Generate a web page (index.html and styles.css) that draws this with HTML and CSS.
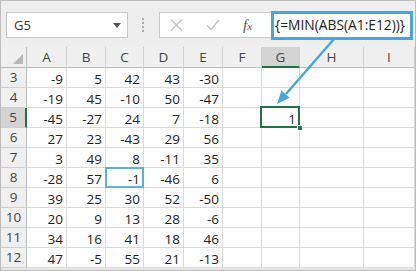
FILE: index.html
```html
<!DOCTYPE html>
<html lang="en">
<head>
    <meta charset="UTF-8">
    <title>MIN(ABS) array formula</title>
    <link rel="stylesheet" href="styles.css">
</head>
<body>
    <div class="window">
        <div class="toolbar">
            <div class="namebox">
                <span>G5</span>
                <svg class="caret" width="8" height="5" viewBox="0 0 8 5"><path d="M0 0h8L4 5z"/></svg>
            </div>
            <div class="grip"></div>
            <div class="formula-bar">
                <svg class="icon-cancel" width="13" height="12" viewBox="0 0 13 12"><path d="M1 0.5l11 11M12 0.5L1 11.5"/></svg>
                <svg class="icon-enter" width="14" height="12" viewBox="0 0 14 12"><path d="M1 6.5l4 4L13 1"/></svg>
                <span class="fx"><i>f</i><i class="fx-x">x</i></span>
                <div class="formula-input">{=MIN(ABS(A1:E12))}</div>
            </div>
        </div>

        <div class="sheet">
            <div class="hd corner"><span class="corner-mark"></span></div>
            <div class="hd">A</div><div class="hd">B</div><div class="hd">C</div><div class="hd">D</div>
            <div class="hd">E</div><div class="hd">F</div><div class="hd active-col">G</div><div class="hd">H</div><div class="hd">I</div>

            <div class="rh">3</div>
            <div class="c">-9</div><div class="c">5</div><div class="c">42</div><div class="c">43</div><div class="c">-30</div>
            <div class="c"></div><div class="c"></div><div class="c"></div><div class="c"></div>

            <div class="rh">4</div>
            <div class="c">-19</div><div class="c">45</div><div class="c">-10</div><div class="c">50</div><div class="c">-47</div>
            <div class="c"></div><div class="c"></div><div class="c"></div><div class="c"></div>

            <div class="rh active-row">5</div>
            <div class="c">-45</div><div class="c">-27</div><div class="c">24</div><div class="c">7</div><div class="c">-18</div>
            <div class="c"></div><div class="c selected">1<span class="handle"></span></div><div class="c"></div><div class="c"></div>

            <div class="rh">6</div>
            <div class="c">27</div><div class="c">23</div><div class="c">-43</div><div class="c">29</div><div class="c">56</div>
            <div class="c"></div><div class="c"></div><div class="c"></div><div class="c"></div>

            <div class="rh">7</div>
            <div class="c">3</div><div class="c">49</div><div class="c">8</div><div class="c">-11</div><div class="c">35</div>
            <div class="c"></div><div class="c"></div><div class="c"></div><div class="c"></div>

            <div class="rh">8</div>
            <div class="c">-28</div><div class="c">57</div><div class="c marked">-1</div><div class="c">-46</div><div class="c">6</div>
            <div class="c"></div><div class="c"></div><div class="c"></div><div class="c"></div>

            <div class="rh">9</div>
            <div class="c">39</div><div class="c">25</div><div class="c">30</div><div class="c">52</div><div class="c">-50</div>
            <div class="c"></div><div class="c"></div><div class="c"></div><div class="c"></div>

            <div class="rh">10</div>
            <div class="c">20</div><div class="c">9</div><div class="c">13</div><div class="c">28</div><div class="c">-6</div>
            <div class="c"></div><div class="c"></div><div class="c"></div><div class="c"></div>

            <div class="rh">11</div>
            <div class="c">34</div><div class="c">16</div><div class="c">41</div><div class="c">18</div><div class="c">46</div>
            <div class="c"></div><div class="c"></div><div class="c"></div><div class="c"></div>

            <div class="rh">12</div>
            <div class="c">47</div><div class="c">-5</div><div class="c">55</div><div class="c">21</div><div class="c">-13</div>
            <div class="c"></div><div class="c"></div><div class="c"></div><div class="c"></div>
        </div>

        <!-- callout arrow from the formula to the result cell -->
        <svg class="arrow" width="416" height="271" viewBox="0 0 416 271">
            <line x1="334" y1="39" x2="286" y2="94"/>
            <polygon points="277,104 289.7,97.8 281.5,90.6"/>
        </svg>
    </div>
</body>
</html>
```

FILE: styles.css
```css
* {
    box-sizing: border-box;
}
body {
    margin: 0;
    font-family: "Open Sans", sans-serif;
    color: #222;
}
.window {
    position: relative;
    width: 416px;
    height: 271px;
    border: 1px solid #bdbdbd;
    background: #e6e6e6;
    overflow: hidden;
}

/* name box + formula bar */
.toolbar {
    display: flex;
    align-items: flex-start;
    height: 46px;
    padding: 11px 2px 0 5px;
    background: #eeeeee;
}
.namebox {
    display: flex;
    align-items: center;
    justify-content: space-between;
    width: 122px;
    height: 26px;
    padding: 0 6px 0 7px;
    background: #fff;
    border: 1px solid #c8c8c8;
    font-size: 13px;
    color: #333;
}
.caret {
    fill: #555;
}
.grip {
    width: 2px;
    height: 14px;
    margin: 6px 0 0 14px;
    border-left: 2px dotted #a8a8a8;
}
.formula-bar {
    display: flex;
    align-items: center;
    flex: 1;
    height: 26px;
    margin-left: 15px;
    background: #fff;
    border: 1px solid #c8c8c8;
}
.icon-cancel,
.icon-enter {
    fill: none;
    stroke: #c4c4c4;
    stroke-width: 1.5;
}
.icon-cancel {
    margin-left: 10px;
}
.icon-enter {
    margin-left: 23px;
}
.fx {
    width: 13px;
    margin-left: 23px;
    font-family: "Liberation Serif", serif;
    font-size: 15px;
    color: #555;
}
.fx-x {
    font-size: 11px;
}
.formula-input {
    flex: 1;
    align-self: stretch;
    margin: -2px -1px -3px 15px;
    padding-left: 1px;
    border: 3px solid #45a8dc;
    background: #fff;
    font-size: 13.8px;
    line-height: 22px;
    white-space: nowrap;
}

/* worksheet grid */
.sheet {
    display: grid;
    grid-template-columns: 26px 40px 39px 38px 40px 39px 39px 38px 64px 1fr;
    grid-template-rows: 21px repeat(10, 20px);
    background: #fff;
}
.hd {
    background: #f0f0f0;
    border-right: 1px solid #d0d0d0;
    border-bottom: 1px solid #bcbcbc;
    text-align: center;
    font-size: 13.5px;
    line-height: 20px;
    color: #444;
}
.corner {
    position: relative;
    border-right-color: #bcbcbc;
}
.corner-mark {
    position: absolute;
    right: 3px;
    bottom: 3px;
    width: 10px;
    height: 10px;
    background: #b7b7b7;
    clip-path: polygon(100% 0, 100% 100%, 0 100%);
}
.active-col {
    background: #d4d4d4;
    border-bottom: 2px solid #217346;
}
.rh {
    background: #f0f0f0;
    border-right: 1px solid #bcbcbc;
    border-bottom: 1px solid #d0d0d0;
    text-align: center;
    font-size: 13.5px;
    line-height: 19px;
    color: #444;
}
.active-row {
    background: #d4d4d4;
    border-right: 2px solid #217346;
}
.c {
    position: relative;
    padding: 4px 3px 0 0;
    border-right: 1px solid #dadada;
    border-bottom: 1px solid #dadada;
    text-align: right;
    font-size: 13.5px;
    line-height: 15px;
}
.selected::after {
    content: "";
    position: absolute;
    top: -2px;
    left: -2px;
    right: -1px;
    bottom: -1px;
    border: 2px solid #217346;
}
.handle {
    position: absolute;
    right: -4px;
    bottom: -4px;
    width: 6px;
    height: 6px;
    background: #217346;
    border: 1px solid #fff;
    z-index: 1;
}
.marked::after {
    content: "";
    position: absolute;
    top: -1px;
    left: -1px;
    right: -1px;
    bottom: -1px;
    border: 2px solid #5ab2dc;
}

.arrow {
    position: absolute;
    top: -1px;
    left: -1px;
    pointer-events: none;
}
.arrow line {
    stroke: #45a8dc;
    stroke-width: 2.5;
}
.arrow polygon {
    fill: #45a8dc;
}
```
